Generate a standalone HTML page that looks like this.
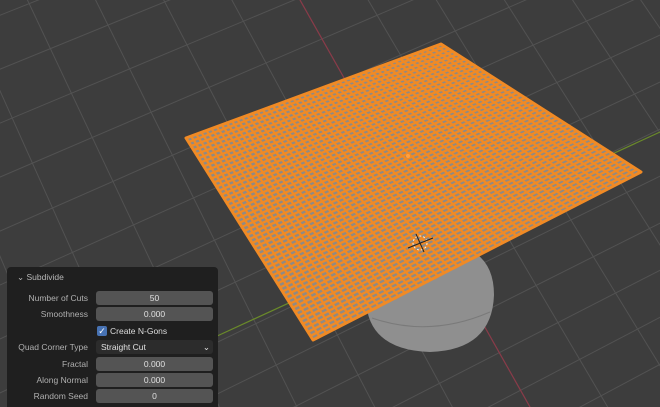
<!DOCTYPE html><html style="overflow:hidden"><head><style>
html,body{margin:0;width:660px;height:407px;overflow:hidden;background:#3d3d3d;font-family:"Liberation Sans",sans-serif}
svg{position:absolute;left:0;top:0}
.p{position:absolute;left:7px;top:267px;width:211px;height:140px;background:#1f1f1f;border-radius:4px 4px 0 0;color:#c8c8c8;font-size:8.5px;overflow:hidden}
.h{position:absolute;left:10px;top:5px;color:#b8b8b8}
.r{position:absolute;left:0;width:211px;height:14px}
.l{position:absolute;right:130px;top:2px;text-align:right;white-space:nowrap;color:#b0b0b0}
.f{position:absolute;left:89px;width:117px;height:14px;background:#545454;border-radius:3px;text-align:center;line-height:14px;color:#e0e0e0}
</style></head><body>
<svg id="s" width="660" height="407" style="overflow:hidden">
<g stroke="#525252" stroke-width="1" id="grid"></g>
<line x1="300" y1="0" x2="530" y2="407" stroke="#8a3a48" stroke-width="1.2"/>
<line x1="215" y1="337" x2="660" y2="132" stroke="#6a8a2a" stroke-width="1.2"/>
<path d="M366,300 Q368,350 430,352 Q492,350 494,295 Q494,262 470,250 L400,260 Z" fill="#8f8f8f"/>
<path d="M372,318 Q430,338 490,312" stroke="#7a7a7a" fill="none"/>
<polygon points="186,138 441,44 641,172 313,340" fill="#8e8a86" stroke="#f08a25" stroke-width="3" stroke-linejoin="round"/>
<g id="m" stroke="#f08a25" stroke-width="2.3"></g>
<circle cx="408" cy="156" r="2" fill="#ffa040"/>
<circle cx="420" cy="243" r="7" fill="none" stroke="#eee" stroke-dasharray="2,2"/>
<line x1="408" y1="248" x2="433" y2="238" stroke="#222"/><line x1="416" y1="234" x2="424" y2="252" stroke="#222"/>
</svg>
<div class="p">
<div class="h">⌄ Subdivide</div>
<div class="r" style="top:24px"><span class="l">Number of Cuts</span><div class="f">50</div></div>
<div class="r" style="top:40px"><span class="l">Smoothness</span><div class="f">0.000</div></div>
<div class="r" style="top:57px"><div style="position:absolute;left:90px;top:2px;width:10px;height:10px;background:#4772b3;border-radius:2px;color:#fff;font-size:9px;line-height:10px;text-align:center">✓</div><span style="position:absolute;left:103px;top:2px;color:#ddd">Create N-Gons</span></div>
<div class="r" style="top:73px"><span class="l">Quad Corner Type</span><div class="f" style="background:#2c2c2c;text-align:left;padding-left:5px;width:112px">Straight Cut<span style="position:absolute;right:3px">⌄</span></div></div>
<div class="r" style="top:90px"><span class="l">Fractal</span><div class="f">0.000</div></div>
<div class="r" style="top:106px"><span class="l">Along Normal</span><div class="f">0.000</div></div>
<div class="r" style="top:122px"><span class="l">Random Seed</span><div class="f">0</div></div>
</div>
<script>
var ns="http://www.w3.org/2000/svg";
function L(g,a,b,c,d){var e=document.createElementNS(ns,"line");e.setAttribute("x1",a);e.setAttribute("y1",b);e.setAttribute("x2",c);e.setAttribute("y2",d);g.appendChild(e);}
var g=document.getElementById("grid");
for(var i=-12;i<=14;i++){var x0=300+i*62;L(g,x0-100*(1-i*0.02),-177,x0+330*(1+i*0.06),584);}
for(var j=-10;j<=12;j++){var y0=337+j*52;L(g,-100,y0+48+j*3,760,y0-348-j*6);}
var m=document.getElementById("m");
var A=[186,138],B=[441,44],C=[641,172],D=[313,340],N=50;
function P(u,v){return[(1-u)*(1-v)*A[0]+u*(1-v)*B[0]+u*v*C[0]+(1-u)*v*D[0],(1-u)*(1-v)*A[1]+u*(1-v)*B[1]+u*v*C[1]+(1-u)*v*D[1]];}
for(var k=0;k<=N;k++){var t=k/N;var p=P(t,0),q=P(t,1);L(m,p[0],p[1],q[0],q[1]);p=P(0,t);q=P(1,t);L(m,p[0],p[1],q[0],q[1]);}
</script>
</body></html>
